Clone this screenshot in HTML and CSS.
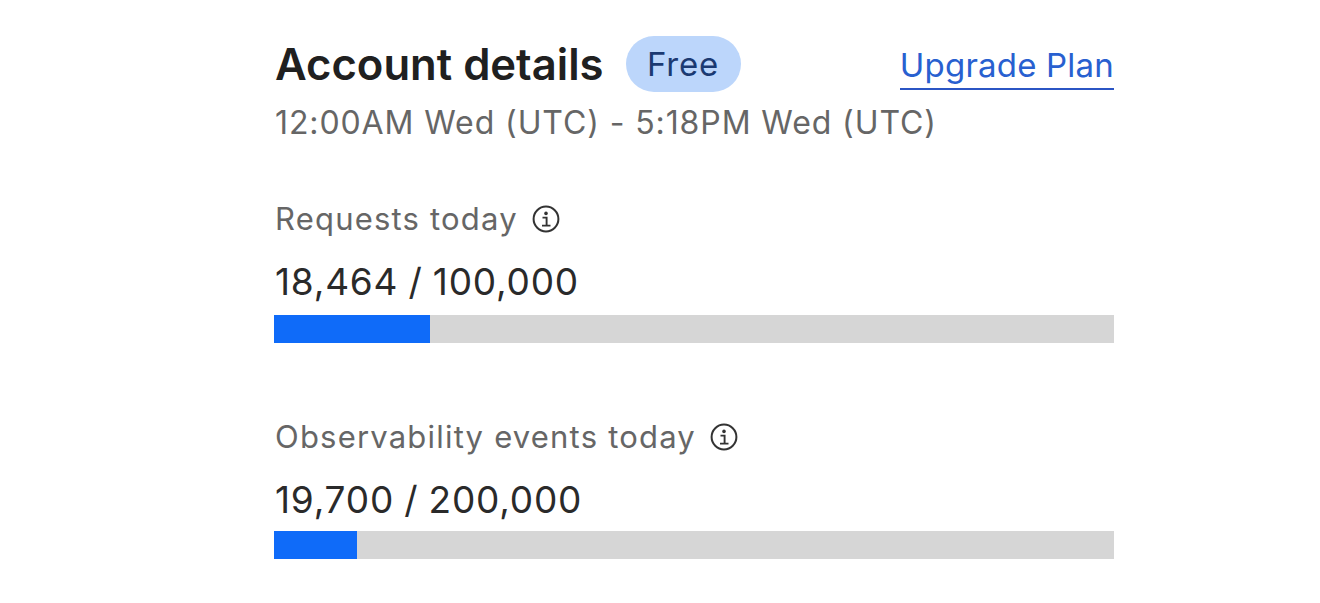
FILE: index.html
```html
<!DOCTYPE html>
<html lang="en">
<head>
<meta charset="utf-8">
<title>Account details</title>
<link rel="stylesheet" href="styles.css">
</head>
<body>
<main class="panel">
  <header class="head">
    <div class="title-row">
      <h1 class="title">Account details</h1>
      <span class="badge">Free</span>
      <a class="upgrade" href="#">Upgrade Plan</a>
    </div>
    <p class="range">12:00AM Wed (UTC) - 5:18PM Wed (UTC)</p>
  </header>
  <section class="metric">
    <div class="label">Requests today
      <svg class="info" viewBox="0 0 28 28" width="28" height="28"><circle cx="14" cy="14" r="12.4" fill="none" stroke="#333" stroke-width="2"/><circle cx="14" cy="8.4" r="1.8" fill="#333"/><path d="M10.5 12.6H14.6V20.4M10 20.6H18.5" fill="none" stroke="#333" stroke-width="1.9"/></svg>
    </div>
    <div class="value">18,464 / 100,000</div>
    <div class="track"><div class="fill" style="width:18.6%"></div></div>
  </section>
  <section class="metric">
    <div class="label">Observability events today
      <svg class="info" viewBox="0 0 28 28" width="28" height="28"><circle cx="14" cy="14" r="12.4" fill="none" stroke="#333" stroke-width="2"/><circle cx="14" cy="8.4" r="1.8" fill="#333"/><path d="M10.5 12.6H14.6V20.4M10 20.6H18.5" fill="none" stroke="#333" stroke-width="1.9"/></svg>
    </div>
    <div class="value">19,700 / 200,000</div>
    <div class="track"><div class="fill" style="width:9.85%"></div></div>
  </section>
</main>
</body>
</html>
```
FILE: styles.css
```css
html, body { margin: 0; padding: 0; background: #fff; }
body { width: 1320px; height: 603px; overflow: hidden; font-family: "Inter", "Liberation Sans", sans-serif; }
.panel { width: 840px; margin-left: 274px; padding-top: 36px; display: flex; flex-direction: column; }
.title-row { display: flex; align-items: center; height: 56px; }
.title { margin: 2px 0 0 1px; font-size: 43.6px; font-weight: 600; color: #202020; line-height: 56px; }
.badge { margin-left: 22px; width: 115px; height: 56px; border-radius: 28px; background: #bcd6fb; color: #1b3a72; font-size: 33px; letter-spacing: 0.8px; display: flex; align-items: center; justify-content: center; }
.upgrade { margin-left: auto; margin-top: 4px; color: #2860d0; font-size: 33px; letter-spacing: 0.2px; text-decoration: none; border-bottom: 2px solid #2b55c4; line-height: 46px; }
.range { margin: 9px 0 0 1px; font-size: 32px; letter-spacing: 0.9px; line-height: 44px; color: #666; }
.metric { margin-top: 54px; }
.metric + .metric { margin-top: 74px; }
.label { margin-left: 1px; display: flex; align-items: center; gap: 14px; font-size: 31px; letter-spacing: 1.2px; line-height: 40px; color: #666; }
.value { margin: 21px 0 0 1px; font-size: 37px; letter-spacing: 0.8px; word-spacing: -1px; line-height: 44px; color: #2a2a2a; }
.track { margin-top: 11px; height: 28px; background: #d6d6d6; }
.metric + .metric .track { margin-top: 9px; }
.fill { height: 100%; background: #0f6bf9; }
```
